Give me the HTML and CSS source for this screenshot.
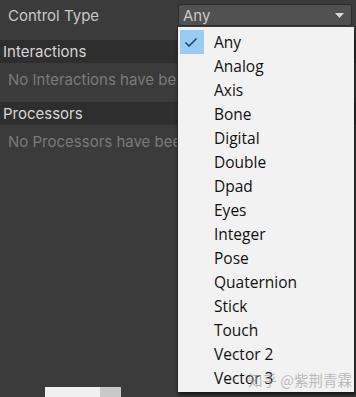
FILE: index.html
```html
<!DOCTYPE html>
<html>
  <head>
    <title>Control Type</title>
    <link rel="stylesheet" href="styles.css">
  </head>
  <body>
    <div class="inspector">
      <!-- Control type row -->
      <div class="field-row">
        <span class="label">Control Type</span>
        <div class="select">
          <span>Any</span>
          <svg class="arrow" width="9" height="5" viewBox="0 0 9 5"><path d="M0 0H9L4.5 5Z" fill="#d8d8d8"/></svg>
        </div>
      </div>

      <div class="section-head">Interactions</div>
      <p class="empty">No Interactions have been added.</p>

      <div class="section-head">Processors</div>
      <p class="empty">No Processors have been added.</p>

      <div class="spacer"></div>

      <!-- bottom button, cut off by the window -->
      <div class="footer">
        <div class="btn-light"></div>
        <div class="btn-grey"></div>
      </div>
    </div>

    <!-- Popup menu of the select -->
    <ul class="menu">
      <li class="checked"><span class="tick"><svg width="24" height="24" viewBox="0 0 24 24"><path d="M5.5 12.5L9 16L16.5 8.5" fill="none" stroke="#1d4a78" stroke-width="1.6"/></svg></span>Any</li>
      <li><span class="tick"></span>Analog</li>
      <li><span class="tick"></span>Axis</li>
      <li><span class="tick"></span>Bone</li>
      <li><span class="tick"></span>Digital</li>
      <li><span class="tick"></span>Double</li>
      <li><span class="tick"></span>Dpad</li>
      <li><span class="tick"></span>Eyes</li>
      <li><span class="tick"></span>Integer</li>
      <li><span class="tick"></span>Pose</li>
      <li><span class="tick"></span>Quaternion</li>
      <li><span class="tick"></span>Stick</li>
      <li><span class="tick"></span>Touch</li>
      <li><span class="tick"></span>Vector 2</li>
      <li><span class="tick"></span>Vector 3</li>
    </ul>

    <div class="watermark">知乎 @紫荆青霖</div>
  </body>
</html>
```

FILE: styles.css
```css
html, body {
  margin: 0;
  height: 100%;
}
body {
  background-color: #3b3b3b;
  font-family: Inter, "Liberation Sans", sans-serif;
  color: #c8c8c8;
  overflow: hidden;
  position: relative;
}
.inspector {
  display: flex;
  flex-direction: column;
  height: 100%;
}
.field-row {
  display: flex;
  align-items: center;
  height: 22px;
  padding: 4px 4px 0 8px;
  margin-bottom: 14px;
}
.label {
  font-size: 15px;
  width: 170px;
}
.select {
  flex: 1;
  height: 20px;
  display: flex;
  align-items: center;
  justify-content: space-between;
  padding: 0 7px 0 4px;
  background-color: #515151;
  border: 1px solid #2c2c2c;
  border-radius: 3px;
  font-size: 15px;
}
.section-head {
  background-color: #2e2e2e;
  height: 23px;
  line-height: 23px;
  padding-left: 3px;
  font-size: 15px;
  color: #d6d6d6;
}
.empty {
  box-sizing: border-box;
  width: 177px;
  overflow: hidden;
  margin: 0;
  height: 39px;
  line-height: 34px;
  padding-left: 8px;
  font-size: 15px;
  color: #7a7a7a;
  white-space: nowrap;
}
.spacer {
  flex: 1;
}
.footer {
  display: flex;
  height: 10px;
  padding-left: 45px;
}
.btn-light {
  width: 55px;
  background-color: #f0f0f0;
}
.btn-grey {
  width: 21px;
  background-color: #c9c9c9;
}
.menu {
  position: absolute;
  left: 177px;
  top: 27px;
  width: 176px;
  margin: 0;
  padding: 3px 0 2px 0;
  list-style: none;
  background-color: #f2f2f2;
  border-left: 1px solid #2a2a2a;
  box-shadow: 1px 3px 3px rgba(0, 0, 0, 0.6);
  font-family: "Open Sans", "Noto Sans", sans-serif;
  font-size: 15.5px;
  color: #111;
}
.menu li {
  display: flex;
  align-items: center;
  height: 24px;
}
.tick {
  width: 24px;
  height: 24px;
  margin: 0 10px 0 2px;
}
.checked .tick {
  background-color: #99ccf3;
}
.watermark {
  position: absolute;
  left: 248px;
  top: 369px;
  white-space: nowrap;
  font-family: "Noto Sans CJK SC", sans-serif;
  font-size: 14.5px;
  color: rgba(160, 160, 160, 0.7);
}
```
